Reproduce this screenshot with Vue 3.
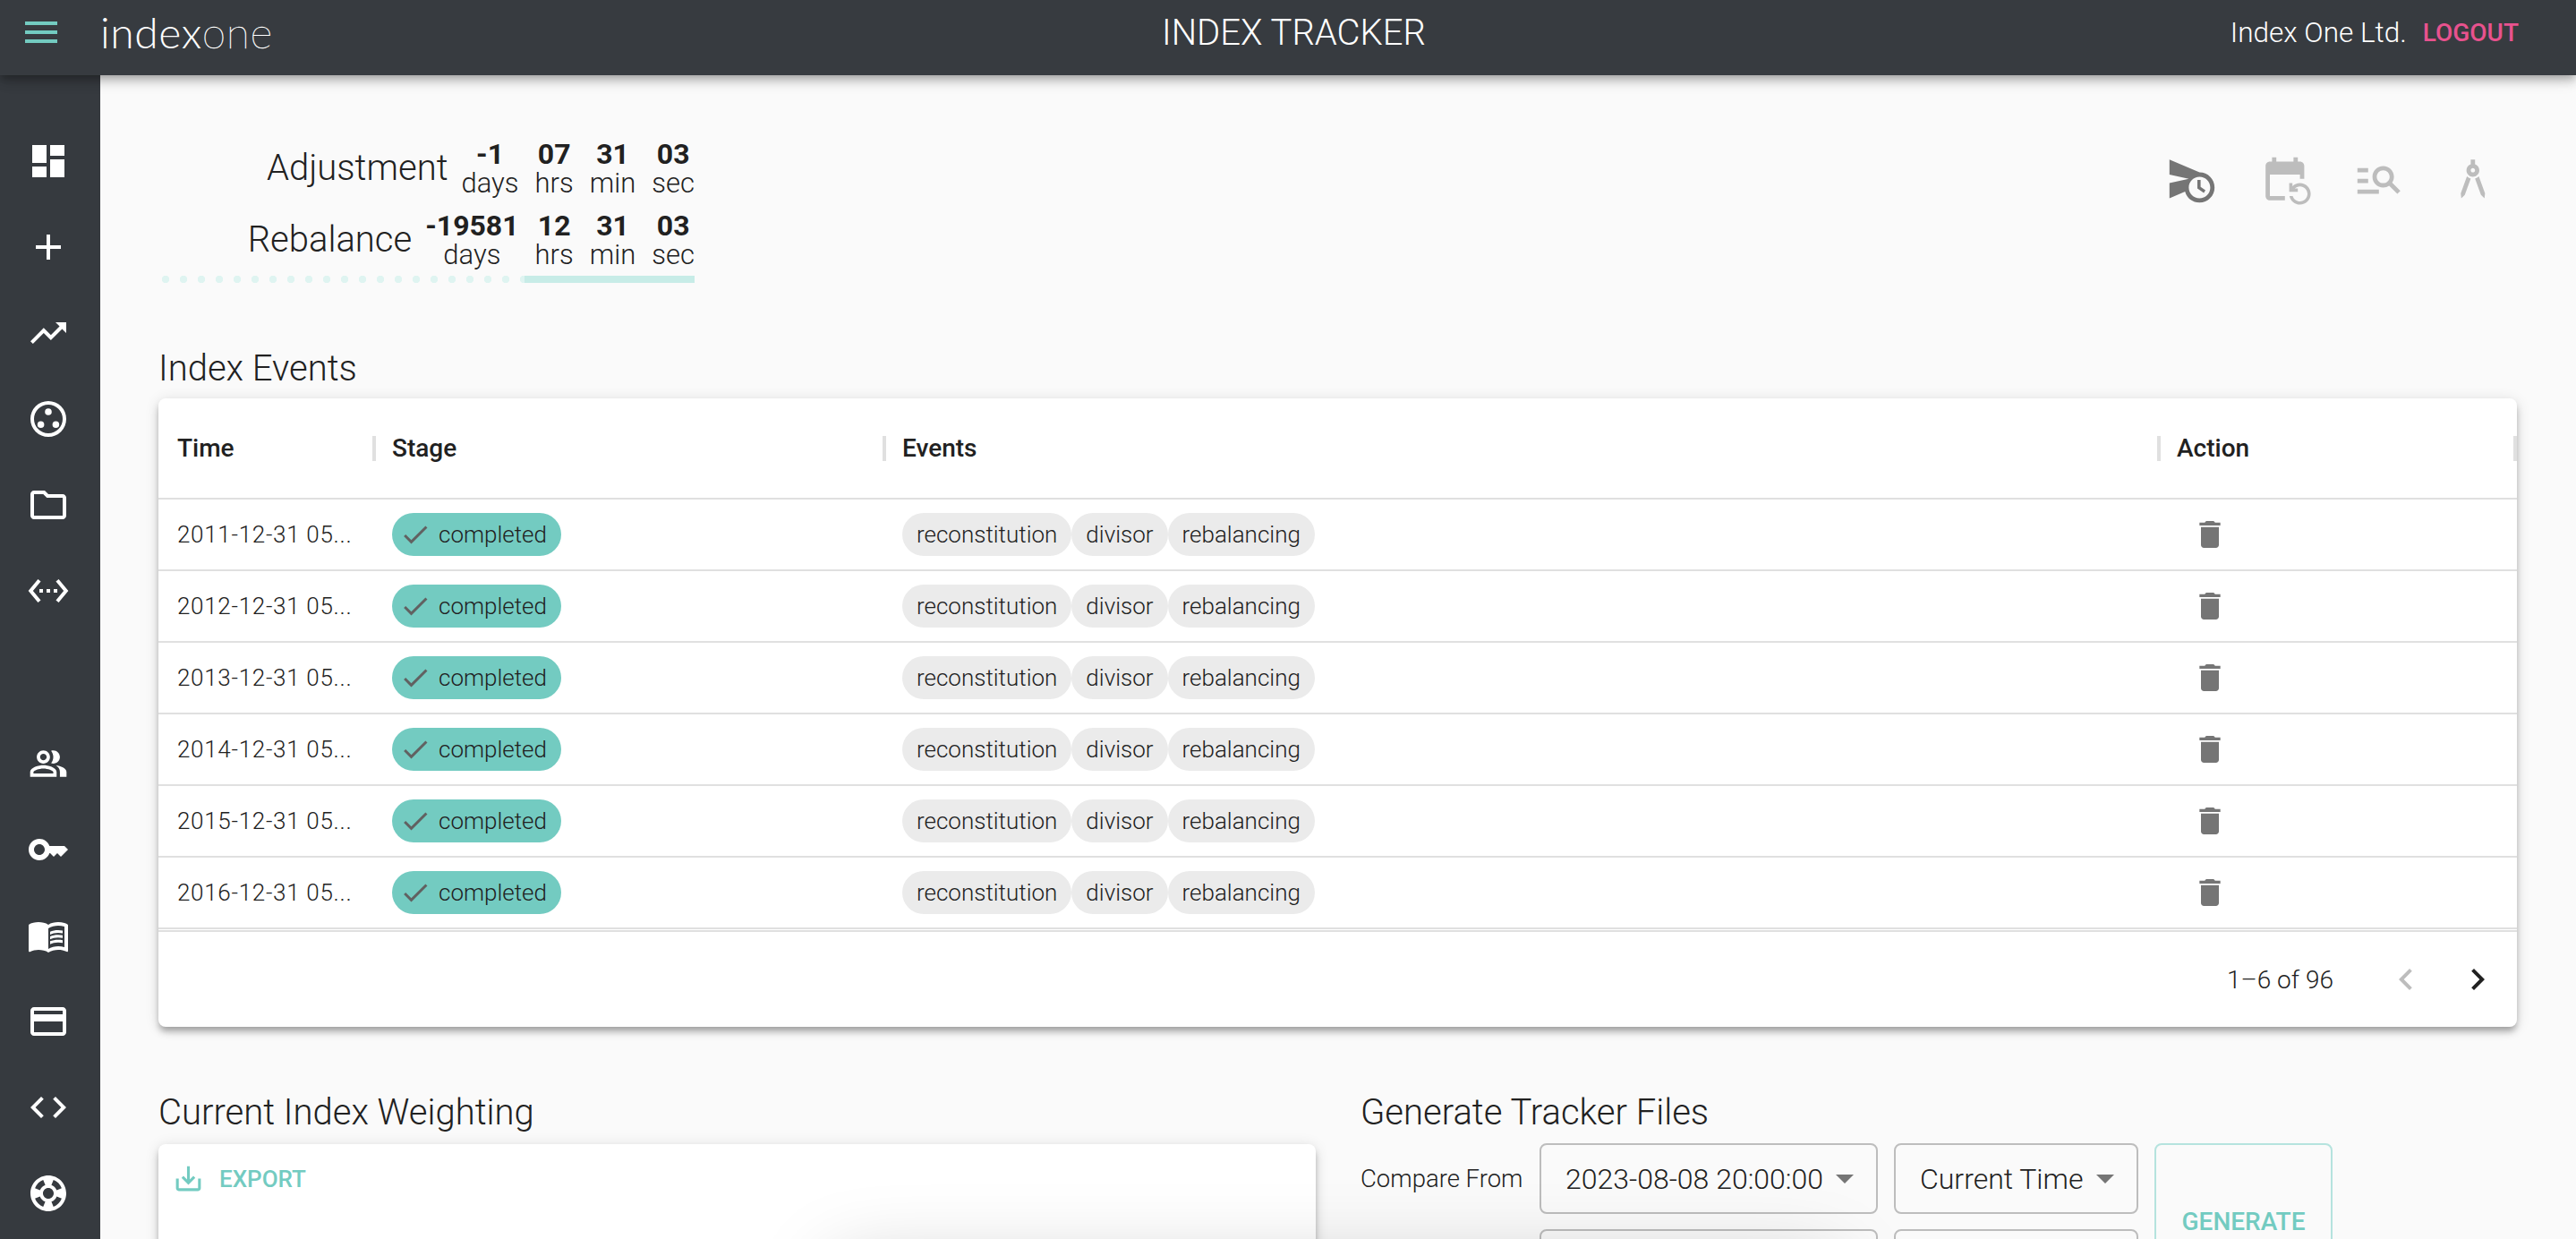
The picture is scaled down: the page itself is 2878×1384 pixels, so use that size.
<script setup>
const navTop = [
  'M3 13h8V3H3v10zm0 8h8v-6H3v6zm10 0h8V11h-8v10zm0-18v6h8V3h-8z',
  'M19 13h-6v6h-2v-6H5v-2h6V5h2v6h6v2z',
  'm16 6 2.29 2.29-4.88 4.88-4-4L2 16.59 3.41 18l6-6 4 4 6.3-6.29L22 12V6z',
  'M12 2a10 10 0 1 0 0 20 10 10 0 0 0 0-20zm0 18a8 8 0 1 1 0-16 8 8 0 0 1 0 16zM12 6.1a1.9 1.9 0 1 0 0 3.8 1.9 1.9 0 0 0 0-3.8zM7.8 13.2a1.9 1.9 0 1 0 0 3.8 1.9 1.9 0 0 0 0-3.8zM16.2 13.2a1.9 1.9 0 1 0 0 3.8 1.9 1.9 0 0 0 0-3.8z',
  'M9.17 6l2 2H20v10H4V6h5.17M10 4H4c-1.1 0-1.99.9-1.99 2L2 18c0 1.1.9 2 2 2h16c1.1 0 2-.9 2-2V8c0-1.1-.9-2-2-2h-8l-2-2z',
  'M7.77 6.76 6.23 5.48.82 12l5.41 6.52 1.54-1.28L3.42 12l4.35-5.24zM7 13h2v-2H7v2zm10-2h-2v2h2v-2zm-6 2h2v-2h-2v2zm6.77-7.52-1.54 1.28L20.58 12l-4.35 5.24 1.54 1.28L23.18 12l-5.41-6.52z',
]
const navBottom = [
  'M16.67 13.13C18.04 14.06 19 15.32 19 17v3h4v-3c0-2.18-3.57-3.47-6.33-3.87zM15 12c2.21 0 4-1.79 4-4s-1.79-4-4-4c-.47 0-.91.1-1.33.24C14.5 5.27 15 6.58 15 8s-.5 2.73-1.33 3.76c.42.14.86.24 1.33.24zM9 12c2.21 0 4-1.79 4-4s-1.79-4-4-4-4 1.79-4 4 1.79 4 4 4zm0-6c1.1 0 2 .9 2 2s-.9 2-2 2-2-.9-2-2 .9-2 2-2zM9 13c-2.67 0-8 1.34-8 4v3h16v-3c0-2.66-5.33-4-8-4zm6 5H3v-.99C3.2 16.29 6.3 15 9 15s5.8 1.29 6 2v1z',
  'M21 10h-8.35C11.83 7.67 9.61 6 7 6c-3.31 0-6 2.69-6 6s2.69 6 6 6c2.61 0 4.83-1.67 5.65-4H13l2 2 2-2 2 2 4-4.04L21 10zM7 15c-1.65 0-3-1.35-3-3s1.35-3 3-3 3 1.35 3 3-1.35 3-3 3z',
  'M21 5c-1.11-.35-2.33-.5-3.5-.5-1.95 0-4.05.4-5.5 1.5-1.45-1.1-3.55-1.5-5.5-1.5S2.45 4.9 1 6v14.65c0 .25.25.5.5.5.1 0 .15-.05.25-.05C3.1 20.45 5.05 20 6.5 20c1.95 0 4.05.4 5.5 1.5 1.35-.85 3.8-1.5 5.5-1.5 1.65 0 3.35.3 4.75 1.05.1.05.15.05.25.05.25 0 .5-.25.5-.5V6c-.6-.45-1.25-.75-2-1zm0 13.5c-1.1-.35-2.3-.5-3.5-.5-1.7 0-4.15.65-5.5 1.5V8c1.35-.85 3.8-1.5 5.5-1.5 1.2 0 2.4.15 3.5.5v11.5zM17.5 10.5c.88 0 1.73.09 2.5.26V9.24c-.79-.15-1.64-.24-2.5-.24-1.7 0-3.24.29-4.5.83v1.66c1.13-.64 2.7-.99 4.5-.99zM13 12.49v1.66c1.13-.64 2.7-.99 4.5-.99.88 0 1.73.09 2.5.26V11.9c-.79-.15-1.64-.24-2.5-.24-1.7 0-3.24.3-4.5.83zm4.5 1.84c-1.7 0-3.24.29-4.5.83v1.66c1.13-.64 2.7-.99 4.5-.99.88 0 1.73.09 2.5.26v-1.52c-.79-.16-1.64-.24-2.5-.24z',
  'M20 4H4c-1.11 0-1.99.89-1.99 2L2 18c0 1.11.89 2 2 2h16c1.11 0 2-.89 2-2V6c0-1.11-.89-2-2-2zm0 14H4v-6h16v6zm0-10H4V6h16v2z',
  'M9.4 16.6 4.8 12l4.6-4.6L8 6l-6 6 6 6 1.4-1.4zm5.2 0 4.6-4.6-4.6-4.6L16 6l6 6-6 6-1.4-1.4z',
  'M12 2C6.48 2 2 6.48 2 12s4.48 10 10 10 10-4.48 10-10S17.52 2 12 2zm7.46 7.12-2.78 1.15c-.51-1.36-1.58-2.44-2.95-2.94l1.15-2.78c2.1.8 3.77 2.47 4.58 4.57zM12 15c-1.66 0-3-1.34-3-3s1.34-3 3-3 3 1.34 3 3-1.34 3-3 3zM9.13 4.54l1.17 2.78c-1.38.5-2.47 1.59-2.98 2.97L4.54 9.13c.81-2.11 2.48-3.78 4.59-4.59zM4.54 14.87l2.78-1.15c.51 1.38 1.59 2.46 2.97 2.96l-1.17 2.78c-2.1-.81-3.77-2.48-4.58-4.59zm10.34 4.59-1.15-2.78c1.37-.51 2.45-1.59 2.95-2.97l2.78 1.17c-.81 2.1-2.48 3.77-4.58 4.58z',
]
const tools = [
  { on: true, d: 'M16.5 12.5H15v4l3 2 .75-1.23-2.25-1.52V12.5zM16 9 2 3v7l9 2-9 2v7l7.27-3.11C10.09 20.98 12.82 23 16 23c3.86 0 7-3.14 7-7s-3.14-7-7-7zm0 12c-2.75 0-4.98-2.22-5-4.97v-.07C11.02 13.22 13.25 11 16 11c2.76 0 5 2.24 5 5s-2.24 5-5 5z' },
  { on: false, d: 'M21 12V6c0-1.1-.9-2-2-2h-1V2h-2v2H8V2H6v2H5c-1.1 0-2 .9-2 2v14c0 1.1.9 2 2 2h7v-2H5V10h14v2h2zm-5.36 8c.43 1.45 1.77 2.5 3.36 2.5 1.93 0 3.5-1.57 3.5-3.5s-1.57-3.5-3.5-3.5c-.95 0-1.82.38-2.45 1H18V18h-4v-4h1.5v1.43c.9-.88 2.14-1.43 3.5-1.43 2.76 0 5 2.24 5 5s-2.24 5-5 5c-2.42 0-4.44-1.72-4.9-4h1.54z' },
  { on: false, d: 'M7 9H2V7h5v2zm0 3H2v2h5v-2zm13.59 7-3.83-3.83c-.8.52-1.74.83-2.76.83-2.76 0-5-2.24-5-5s2.24-5 5-5 5 2.24 5 5c0 1.02-.31 1.96-.83 2.75L22 17.59 20.59 19zM17 11c0-1.65-1.35-3-3-3s-3 1.35-3 3 1.35 3 3 3 3-1.35 3-3zM2 19h10v-2H2v2z' },
  { on: false, d: 'M6.36 18.78 6.61 21l1.62-1.54 2.77-7.6c-.68-.17-1.28-.51-1.77-.98l-2.87 7.9zm8.41-7.9c-.49.47-1.1.81-1.77.98l2.77 7.6L17.39 21l.26-2.22-2.88-7.9zM15 8c0-1.3-.84-2.4-2-2.82V3h-2v2.18C9.84 5.6 9 6.7 9 8c0 1.66 1.34 3 3 3s3-1.34 3-3zm-3 1c-.55 0-1-.45-1-1s.45-1 1-1 1 .45 1 1-.45 1-1 1z' },
]
const timers = [
  { label: 'Adjustment', parts: [['-1', 'days'], ['07', 'hrs'], ['31', 'min'], ['03', 'sec']] },
  { label: 'Rebalance', parts: [['-19581', 'days'], ['12', 'hrs'], ['31', 'min'], ['03', 'sec']] },
]
const columns = ['Time', 'Stage', 'Events', 'Action']
const events = ['reconstitution', 'divisor', 'rebalancing']
const rows = ['2011-12-31 05...', '2012-12-31 05...', '2013-12-31 05...', '2014-12-31 05...', '2015-12-31 05...', '2016-12-31 05...']
</script>

<template>
  <div class="app">
    <header class="appbar">
      <div class="brand">
        <svg class="menu-icon" viewBox="0 0 24 24"><path d="M3 18h18v-2H3v2zm0-5h18v-2H3v2zm0-7v2h18V6H3z" /></svg>
        <div class="logo">index<span>one</span></div>
      </div>
      <div class="app-title">INDEX TRACKER</div>
      <div class="account">
        <span class="company">Index One Ltd.</span>
        <span class="logout">LOGOUT</span>
      </div>
    </header>

    <div class="body-row">
      <aside class="sidebar">
        <div class="nav-group">
          <div v-for="d in navTop" :key="d" class="nav-item">
            <svg viewBox="0 0 24 24"><path :d="d" /></svg>
          </div>
        </div>
        <div class="nav-group lower">
          <div v-for="(d, i) in navBottom" :key="d" class="nav-item">
            <svg :viewBox="i === 0 ? '-1 -1 26 26' : '0 0 24 24'"><path :d="d" /></svg>
          </div>
        </div>
      </aside>

      <main class="content">
        <section class="top-row">
          <div class="timers">
            <div v-for="t in timers" :key="t.label" class="timer-row">
              <div class="timer-label">{{ t.label }}</div>
              <div v-for="p in t.parts" :key="p[1]" class="timer-part">
                <div class="timer-value">{{ p[0] }}</div>
                <div class="timer-unit">{{ p[1] }}</div>
              </div>
            </div>
            <div class="progress">
              <div class="progress-buffer"></div>
              <div class="progress-bar"></div>
            </div>
          </div>
          <div class="tools">
            <svg v-for="tool in tools" :key="tool.d" class="tool" :class="{ on: tool.on }" viewBox="0 0 24 24">
              <path :d="tool.d" />
            </svg>
          </div>
        </section>

        <h2 class="heading events-heading">Index Events</h2>
        <div class="card table">
          <div class="grid-row head">
            <div v-for="c in columns" :key="c" class="head-cell"><span>{{ c }}</span></div>
          </div>
          <div v-for="r in rows" :key="r" class="grid-row row">
            <div class="cell time">{{ r }}</div>
            <div class="cell">
              <div class="chip done">
                <svg viewBox="0 0 24 24"><path d="M9 16.17 4.83 12l-1.42 1.41L9 19 21 7l-1.41-1.41z" /></svg>
                completed
              </div>
            </div>
            <div class="cell">
              <div v-for="e in events" :key="e" class="chip">{{ e }}</div>
            </div>
            <div class="cell">
              <svg class="trash" viewBox="0 0 24 24"><path d="M6 19c0 1.1.9 2 2 2h8c1.1 0 2-.9 2-2V7H6v12zM19 4h-3.5l-1-1h-5l-1 1H5v2h14V4z" /></svg>
            </div>
          </div>
          <div class="table-footer">
            <span class="count">1–6 of 96</span>
            <svg class="page-btn off" viewBox="0 0 24 24"><path d="M15.41 7.41 14 6l-6 6 6 6 1.41-1.41L10.83 12z" /></svg>
            <svg class="page-btn" viewBox="0 0 24 24"><path d="M10 6 8.59 7.41 13.17 12l-4.58 4.58L10 18l6-6z" /></svg>
          </div>
        </div>

        <section class="bottom-row">
          <div>
            <h2 class="heading">Current Index Weighting</h2>
            <div class="card weighting">
              <div class="export">
                <svg viewBox="0 0 24 24"><path d="M19 12v7H5v-7H3v7c0 1.1.9 2 2 2h14c1.100 0 2-.9 2-2v-7h-2zm-6 .67 2.59-2.58L17 11.5l-5 5-5-5 1.41-1.41L11 12.67V3h2z" /></svg>
                EXPORT
              </div>
            </div>
          </div>
          <div>
            <h2 class="heading">Generate Tracker Files</h2>
            <div class="tracker-form">
              <div class="form-label">Compare From</div>
              <div class="select"><span>2023-08-08 20:00:00</span><i class="caret"></i></div>
              <div class="select"><span>Current Time</span><i class="caret"></i></div>
              <div class="generate">GENERATE</div>
              <div></div>
              <div class="select"></div>
              <div class="select"></div>
            </div>
          </div>
        </section>

        <div class="under-glow"></div>
      </main>
    </div>
  </div>
</template>

<style>
html, body {
  margin: 0;
  overflow: hidden;
  background: #fafafa;
}
</style>

<style scoped>
.app {
  height: 100vh;
  overflow: hidden;
  display: flex;
  flex-direction: column;
  font-family: Roboto, "Liberation Sans", sans-serif;
  color: #212121;
  background: #fafafa;
}

.appbar {
  height: 84px;
  box-sizing: border-box;
  flex: none;
  display: grid;
  grid-template-columns: 1276px auto 1fr;
  align-items: center;
  padding: 0 64px 12px 22px;
  background: #373b40;
  color: #fff;
  position: relative;
  z-index: 2;
  box-shadow: 0 4px 8px -2px rgba(0, 0, 0, .2), 0 8px 10px rgba(0, 0, 0, .14), 0 2px 20px rgba(0, 0, 0, .12);
}
.brand {
  display: flex;
  align-items: center;
}
.menu-icon {
  width: 48px;
  height: 48px;
  fill: #73cbc1;
}
.logo {
  margin-left: 42px;
  font-family: Lato, sans-serif;
  font-weight: 300;
  font-size: 48px;
  line-height: 56px;
  letter-spacing: .6px;
}
.logo span {
  font-weight: 100;
  -webkit-text-stroke: .4px #fff;
}
.app-title {
  font-size: 40px;
  font-weight: 300;
}
.account {
  display: flex;
  justify-content: flex-end;
  align-items: center;
  gap: 18px;
}
.company {
  font-size: 31.5px;
  font-weight: 300;
}
.logout {
  font-size: 28px;
  font-weight: 500;
  color: #e8528e;
}

.body-row {
  flex: 1;
  display: flex;
  min-height: 0;
}
.sidebar {
  width: 112px;
  flex: none;
  padding-top: 48px;
  background: #363a3f;
}
.nav-group.lower {
  margin-top: 97px;
}
.nav-item {
  height: 96px;
  padding-right: 4px;
  display: flex;
  align-items: center;
  justify-content: center;
}
.nav-item svg {
  width: 48px;
  height: 48px;
  fill: #fff;
}

.content {
  flex: 1;
  min-width: 0;
  padding: 70px 66px 0 65px;
  position: relative;
  overflow: hidden;
}
.top-row {
  display: flex;
  justify-content: space-between;
  align-items: flex-start;
}
.timers {
  width: 595px;
  margin-left: 4px;
}
.timer-row {
  height: 66px;
  margin-bottom: 14px;
  display: flex;
  justify-content: flex-end;
  align-items: center;
  gap: 18px;
}
.timer-label {
  margin-right: -3px;
  font-size: 40px;
  font-weight: 300;
}
.timer-part {
  text-align: center;
}
.timer-value {
  font-size: 32px;
  line-height: 36px;
  font-weight: 700;
}
.timer-unit {
  font-size: 31px;
  line-height: 30px;
  font-weight: 300;
}
.progress {
  display: flex;
  height: 8px;
  margin-top: -6px;
}
.progress-buffer {
  width: 405px;
  background-image: radial-gradient(circle, #dff4f1 0, #dff4f1 4px, transparent 4.5px);
  background-size: 20px 8px;
  background-position: -6px 0;
  background-repeat: repeat-x;
}
.progress-bar {
  flex: 1;
  background: #c7ece7;
}
.tools {
  display: flex;
  gap: 47.4px;
  margin-top: 17px;
  margin-right: 20px;
}
.tool {
  width: 57.6px;
  height: 57.6px;
  fill: #bdbdbd;
}
.tool.on {
  fill: #757575;
}

.heading {
  margin: 0 0 11px;
  font-size: 40px;
  line-height: 48px;
  font-weight: 300;
}
.events-heading {
  margin-top: 72px;
  margin-bottom: 9px;
}
.card {
  background: #fff;
  border-radius: 8px;
  box-shadow: 0 6px 6px -2px rgba(0, 0, 0, .2), 0 6px 8px rgba(0, 0, 0, .14), 0 2px 16px rgba(0, 0, 0, .12);
}
.table {
  height: 702px;
}
.grid-row {
  display: grid;
  grid-template-columns: 239px 570px 1424px 1fr;
}
.head {
  height: 111px;
  border-bottom: 2px solid #e0e0e0;
}
.head-cell {
  display: flex;
  align-items: center;
  font-size: 28px;
  font-weight: 500;
}
.head-cell span {
  display: block;
  flex: 1;
  line-height: 28px;
  padding-left: 18px;
  border-left: 4px solid #e0e0e0;
}
.head-cell:first-child span {
  border-left: 0;
  padding-left: 21px;
}
.head-cell:last-child span {
  border-right: 4px solid #e0e0e0;
}
.row {
  height: 78px;
  border-bottom: 2px solid #e0e0e0;
}
.cell {
  display: flex;
  align-items: center;
  padding-left: 22px;
  font-size: 26px;
  font-weight: 300;
}
.cell.time {
  padding-left: 21px;
  letter-spacing: .7px;
}
.chip {
  height: 48px;
  padding: 0 16px;
  display: flex;
  align-items: center;
  border-radius: 24px;
  background: #ebebeb;
}
.chip.done {
  width: 189px;
  box-sizing: border-box;
  padding: 0 0 0 8px;
  background: #73cbc1;
}
.chip svg {
  width: 36px;
  height: 36px;
  margin-right: 8px;
  fill: #616161;
}
.trash {
  width: 40px;
  height: 40px;
  margin-left: 17px;
  fill: #757575;
}
.table-footer {
  height: 106px;
  margin-top: 1px;
  border-top: 2px solid #e0e0e0;
  display: flex;
  justify-content: flex-end;
  align-items: center;
  padding-right: 20px;
  gap: 32px;
}
.count {
  margin-right: 25px;
  font-size: 28px;
  font-weight: 300;
}
.page-btn {
  width: 48px;
  height: 48px;
  fill: #212121;
}
.page-btn.off {
  fill: #bdbdbd;
}

.bottom-row {
  margin-top: 72px;
  display: grid;
  grid-template-columns: 1293px 1fr;
  column-gap: 50px;
}
.weighting {
  height: 500px;
}
.export {
  display: flex;
  align-items: center;
  padding: 20px 0 0 15px;
  font-size: 26px;
  font-weight: 500;
  color: #73cbc1;
}
.export svg {
  width: 37px;
  height: 37px;
  margin-right: 16px;
  fill: #73cbc1;
}
.tracker-form {
  display: grid;
  grid-template-columns: 182px 378px 273px 199px;
  grid-auto-rows: 79px;
  gap: 17px 18px;
  align-items: center;
  margin-top: -1px;
}
.form-label {
  font-size: 27.5px;
  font-weight: 300;
  white-space: nowrap;
}
.select {
  height: 79px;
  box-sizing: border-box;
  display: flex;
  align-items: center;
  justify-content: space-between;
  padding: 0 25px 0 27px;
  border: 2px solid #bdbdbd;
  border-radius: 8px;
  font-size: 32px;
  font-weight: 300;
}
.caret {
  width: 0;
  height: 0;
  border-left: 10px solid transparent;
  border-right: 10px solid transparent;
  border-top: 10px solid #757575;
}
.generate {
  grid-row: span 2;
  height: 175px;
  box-sizing: border-box;
  display: flex;
  align-items: center;
  justify-content: center;
  border: 2px solid #b5e3de;
  border-radius: 8px;
  color: #73cbc1;
  font-size: 28px;
  font-weight: 500;
}
.under-glow {
  position: absolute;
  left: 860px;
  top: 1370px;
  width: 1040px;
  height: 120px;
  background: #d8d8d8;
  box-shadow: 0 0 90px 40px rgba(0, 0, 0, .22);
  pointer-events: none;
}
</style>
